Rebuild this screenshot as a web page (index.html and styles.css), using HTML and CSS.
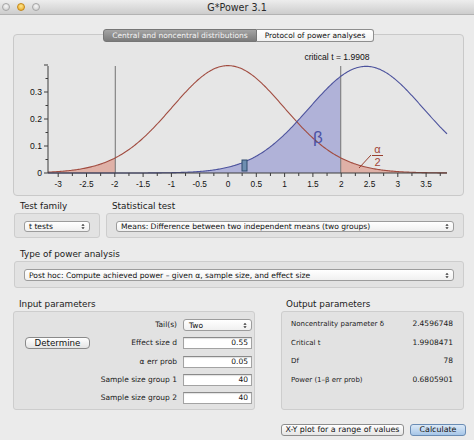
FILE: index.html
```html
<!DOCTYPE html>
<html>
<head>
<meta charset="utf-8">
<title>G*Power 3.1</title>
<link rel="stylesheet" href="styles.css">
</head>
<body>
<div class="titlebar">
  <div class="lights"><span class="light gray"></span><span class="light yellow"></span><span class="light gray"></span></div>
  <div class="title">G*Power 3.1</div>
  <div></div>
</div>
<div class="content">
  <div class="tabs"><span class="tab active">Central and noncentral distributions</span><span class="tab plain">Protocol of power analyses</span></div>
  <div class="chartbox">
    <svg class="chart" viewBox="14 35 449 160" xmlns="http://www.w3.org/2000/svg">
      <path id="bluefill" class="bluefill" d=""/>
      <path id="redfillL" class="redfill" d=""/>
      <path id="redfillR" class="redfill" d=""/>
      <line class="vline" x1="115.3" y1="66" x2="115.3" y2="173"/>
      <line class="vline" x1="340.7" y1="66" x2="340.7" y2="173"/>
      <path id="redline" class="redline" d=""/>
      <path id="blueline" class="blueline" d=""/>
      <path id="ticks" class="axis" d=""/>
      <line class="axis" x1="48" y1="66" x2="48" y2="173"/>
      <line class="axis" x1="48" y1="173" x2="447" y2="173"/>
      <rect class="marker" x="242" y="160" width="5" height="11"/>
      <g class="ylab">
        <text x="42" y="95">0.3</text>
        <text x="42" y="122">0.2</text>
        <text x="42" y="149">0.1</text>
        <text x="42" y="176">0</text>
      </g>
      <g class="xlab">
        <text x="58.2">-3</text>
        <text x="86.5">-2.5</text>
        <text x="114.8">-2</text>
        <text x="143.1">-1.5</text>
        <text x="171.4">-1</text>
        <text x="199.7">-0.5</text>
        <text x="228">0</text>
        <text x="256.3">0.5</text>
        <text x="284.6">1</text>
        <text x="312.9">1.5</text>
        <text x="341.2">2</text>
        <text x="369.5">2.5</text>
        <text x="397.8">3</text>
        <text x="426.1">3.5</text>
      </g>
      <text class="crit" x="337" y="60">critical t = 1.9908</text>
      <text class="beta" x="318" y="143">β</text>
      <text class="alpha" x="377.5" y="153">α</text>
      <line class="fracline" x1="372" y1="155.5" x2="383" y2="155.5"/>
      <text class="alpha two" x="377.5" y="166">2</text>
      <line class="fracline" x1="359" y1="168" x2="371" y2="155"/>
    </svg>
  </div>

  <div class="row row1">
    <div class="group family">
      <div class="glabel">Test family</div>
      <div class="gbox sel">
        <div class="select"><span>t tests</span><svg class="arrows" viewBox="0 0 5 8"><polygon points="0.5,3.2 2.5,0.6 4.5,3.2"/><polygon points="0.5,4.8 2.5,7.4 4.5,4.8"/></svg></div>
      </div>
    </div>
    <div class="group stat">
      <div class="glabel">Statistical test</div>
      <div class="gbox sel">
        <div class="select"><span>Means: Difference between two independent means (two groups)</span><svg class="arrows" viewBox="0 0 5 8"><polygon points="0.5,3.2 2.5,0.6 4.5,3.2"/><polygon points="0.5,4.8 2.5,7.4 4.5,4.8"/></svg></div>
      </div>
    </div>
  </div>

  <div class="group type">
    <div class="glabel">Type of power analysis</div>
    <div class="gbox sel tall">
      <div class="select big"><span>Post hoc: Compute achieved power – given α, sample size, and effect size</span><svg class="arrows" viewBox="0 0 5 8"><polygon points="0.5,3.2 2.5,0.6 4.5,3.2"/><polygon points="0.5,4.8 2.5,7.4 4.5,4.8"/></svg></div>
    </div>
  </div>

  <div class="params">
    <div class="group input">
      <div class="glabel">Input parameters</div>
      <div class="gbox inbox">
        <div class="det">Determine</div>
        <div class="lbl">Tail(s)</div>
        <div class="fld select tail"><span>Two</span><svg class="arrows" viewBox="0 0 5 8"><polygon points="0.5,3.2 2.5,0.6 4.5,3.2"/><polygon points="0.5,4.8 2.5,7.4 4.5,4.8"/></svg></div>
        <div class="lbl">Effect size d</div>
        <div class="fld field">0.55</div>
        <div class="lbl">α err prob</div>
        <div class="fld field">0.05</div>
        <div class="lbl">Sample size group 1</div>
        <div class="fld field">40</div>
        <div class="lbl">Sample size group 2</div>
        <div class="fld field">40</div>
      </div>
    </div>
    <div class="group output">
      <div class="glabel">Output parameters</div>
      <div class="gbox outbox">
        <div class="olbl">Noncentrality parameter δ</div><div class="oval">2.4596748</div>
        <div class="olbl">Critical t</div><div class="oval">1.9908471</div>
        <div class="olbl">Df</div><div class="oval">78</div>
        <div class="olbl">Power (1–β err prob)</div><div class="oval">0.6805901</div>
      </div>
    </div>
  </div>

  <div class="actions">
    <div class="btn xy">X-Y plot for a range of values</div>
    <div class="btn calc">Calculate</div>
  </div>
</div>
<script src="script.js"></script>
</body>
</html>
```

FILE: styles.css
```css
* { box-sizing: border-box; }
html, body { margin: 0; padding: 0; }
body {
  width: 474px;
  height: 440px;
  overflow: hidden;
  background: #ebebeb;
  font-family: "DejaVu Sans", "Liberation Sans", sans-serif;
  color: #1a1a1a;
}

/* title bar */
.titlebar {
  height: 15px;
  display: grid;
  grid-template-columns: 1fr auto 1fr;
  align-items: center;
  background: linear-gradient(#ededed, #cdcdcd);
  border-bottom: 1px solid #b3b3b3;
}
.lights { display: flex; gap: 7px; padding-left: 2px; }
.light { width: 8px; height: 8px; border-radius: 50%; }
.light.gray { background: radial-gradient(circle at 50% 35%, #f6f6f6, #c8c8c8); border: 1px solid #a6a6a6; }
.light.yellow { background: radial-gradient(circle at 50% 35%, #fde68c, #e8a523); border: 1px solid #c48718; }
.title { font-size: 9.6px; color: #2a2a2a; }

.content { padding: 0 10px 0 13px; }

/* tabs */
.tabs {
  display: flex;
  justify-content: center;
  margin-top: 14px;
  position: relative;
  z-index: 1;
}
.tab {
  height: 13px;
  font-size: 7.5px;
  line-height: 11px;
  text-align: center;
  border: 1px solid #8e8e8e;
  white-space: nowrap;
}
.tab.active {
  width: 154px;
  border-radius: 3px 0 0 3px;
  background: linear-gradient(#a4a4a4, #7b7b7b);
  border-color: #767676;
  color: #f4f4f4;
}
.tab.plain {
  width: 117px;
  border-left: 0;
  border-radius: 0 3px 3px 0;
  background: linear-gradient(#ffffff, #f1f1f1);
  color: #111;
}

/* chart */
.chartbox {
  margin-top: -8px;
  height: 162px;
  border: 1px solid #c9c9c9;
  border-radius: 4px;
  background: #e6e6e6;
}
.chart { display: block; width: 449px; height: 160px; }
.bluefill { fill: rgba(80, 86, 190, 0.36); }
.redfill { fill: rgba(214, 112, 92, 0.45); }
.redline { fill: none; stroke: #a14c40; stroke-width: 1.1; }
.blueline { fill: none; stroke: #4d539d; stroke-width: 1.1; }
.vline { stroke: #7d7d7d; stroke-width: 1.1; }
.axis { stroke: #3c3c3c; stroke-width: 1; fill: none; }
.marker { fill: #6e8eb1; stroke: #2e4b6b; stroke-width: 1; }
.chart text { font-family: "Liberation Sans", Arial, sans-serif; fill: #111; }
.ylab text { font-size: 8.6px; text-anchor: end; }
.xlab text { font-size: 8.3px; text-anchor: middle; }
.xlab text { transform: translateY(187px); }
.crit { font-size: 8.6px; text-anchor: middle; }
.beta { font-size: 17px; fill: #4c52a6 !important; text-anchor: middle; }
.alpha { font-size: 11px; fill: #a3473a !important; text-anchor: middle; }
.fracline { stroke: #98402f; stroke-width: 1; }

/* groups */
.row { display: flex; gap: 6px; }
.row1 { margin-top: 5px; padding-left: 1px; }
.group.family { width: 86px; }
.group.stat { flex: 1; }
.glabel {
  font-size: 8.8px;
  line-height: 11px;
  height: 11px;
  padding-left: 6px;
  margin-bottom: 1px;
  color: #1a1a1a;
  white-space: nowrap;
}
.gbox {
  border: 1px solid #cdcdcd;
  border-radius: 3px;
  background: #e2e2e2;
}
.gbox.sel { height: 25px; padding: 7px 9px 0; }
.gbox.sel.tall { height: 27px; }
.select {
  display: flex;
  align-items: center;
  justify-content: space-between;
  height: 11px;
  padding: 0 4px 0 4px;
  border: 1px solid #9c9c9c;
  border-radius: 3px;
  background: linear-gradient(#ffffff, #f0f0f0);
  font-size: 7.6px;
  line-height: 9px;
  color: #111;
  white-space: nowrap;
  overflow: hidden;
}
.select.big { height: 12px; }
.arrows { width: 4px; height: 7px; flex: none; fill: #333; }

.type { margin-top: 11px; padding-left: 1px; }

/* parameters */
.params { display: flex; gap: 26px; margin-top: 11px; }
.group.input { width: 242px; }
.group.output { flex: 1; }
.group.output .glabel { padding-left: 5px; }

.inbox {
  height: 99px;
  display: grid;
  grid-template-columns: 65px 1fr 69px;
  column-gap: 6px;
  grid-auto-rows: 12px;
  row-gap: 6.25px;
  align-content: start;
  padding: 7px 2px 0 11px;
}
.det {
  grid-column: 1;
  grid-row: 2;
  height: 12px;
  border: 1px solid #8a8a8a;
  border-radius: 4px;
  background: linear-gradient(#ffffff, #e4e4e4);
  font-size: 8.7px;
  line-height: 10px;
  text-align: center;
  color: #111;
}
.lbl {
  grid-column: 2;
  font-size: 7.5px;
  line-height: 12px;
  text-align: right;
  white-space: nowrap;
  color: #1a1a1a;
}
.fld { grid-column: 3; }
.select.tail { height: 12px; font-size: 7.5px; padding-left: 5px; }
.field {
  height: 12px;
  border: 1px solid #a3a3a3;
  border-top-color: #8a8a8a;
  background: #fff;
  box-shadow: inset 0 1px 1px rgba(0, 0, 0, 0.12);
  font-size: 7.5px;
  line-height: 10px;
  text-align: right;
  padding-right: 3px;
  color: #111;
}

.outbox {
  height: 99px;
  display: grid;
  grid-template-columns: 1fr auto;
  grid-auto-rows: 12px;
  row-gap: 6.7px;
  align-content: start;
  padding: 6px 10px 0 9px;
}
.olbl { font-size: 7px; line-height: 12px; white-space: nowrap; color: #1a1a1a; }
.oval { font-size: 7.5px; line-height: 12px; text-align: right; color: #1a1a1a; }

/* buttons */
.actions {
  display: flex;
  justify-content: flex-end;
  gap: 6px;
  margin-top: 14px;
  margin-right: -2px;
}
.btn {
  height: 12px;
  font-size: 7.9px;
  line-height: 10px;
  text-align: center;
  border: 1px solid #8d8d8d;
  border-radius: 3px;
  background: linear-gradient(#ffffff, #e5e5e5);
  color: #111;
  white-space: nowrap;
}
.btn.xy { width: 123px; }
.btn.calc {
  width: 56px;
  background: linear-gradient(#dbe9f7, #a6c6e8);
  border-color: #6a8cb4;
}
```

FILE: script.js
```js
(function () {
  var X = function (t) { return 228 + 56.6 * t; };
  var Y = function (d) { return 173 - 270 * d; };
  function ft(t) { return 0.3977 * Math.pow(1 + t * t / 78, -39.5); }
  function fn(t) { var z = (t - 2.44) / 1.01; return 0.395 * Math.exp(-z * z / 2); }
  var t0 = -3.18, t1 = 3.87, cr = 1.9908;
  function curve(f, a, b) {
    var n = Math.max(2, Math.ceil((b - a) / 0.02)), s = '';
    for (var i = 0; i <= n; i++) {
      var t = a + (b - a) * i / n;
      s += (i ? 'L' : 'M') + X(t).toFixed(2) + ' ' + Y(f(t)).toFixed(2);
    }
    return s;
  }
  function area(f, a, b) {
    return curve(f, a, b) + 'L' + X(b).toFixed(2) + ' 173L' + X(a).toFixed(2) + ' 173Z';
  }
  function set(id, d) { var el = document.getElementById(id); if (el) el.setAttribute('d', d); }
  set('bluefill', area(fn, t0, cr));
  set('redfillL', area(ft, t0, -cr));
  set('redfillR', area(ft, cr, t1));
  set('redline', curve(ft, t0, t1));
  set('blueline', curve(fn, t0, t1));
  var tk = '';
  for (var k = -12; k <= 15; k++) {
    var x = X(k * 0.25).toFixed(2);
    var len = (k % 2 === 0) ? 4 : 3;
    tk += 'M' + x + ' 173V' + (173 + len);
  }
  for (var j = 0; j <= 8; j++) {
    var y = Y(j * 0.05).toFixed(2);
    var l = (j % 2 === 0) ? 4 : 2.5;
    tk += 'M48 ' + y + 'H' + (48 - l);
  }
  set('ticks', tk);
})();
```
